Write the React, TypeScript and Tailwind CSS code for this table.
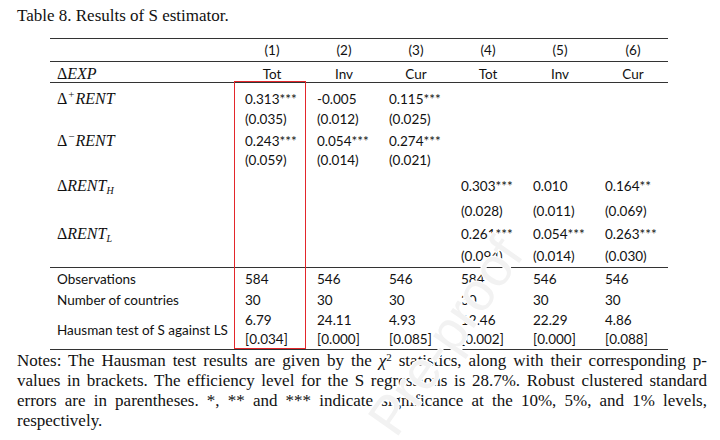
const cols = ["(1)", "(2)", "(3)", "(4)", "(5)", "(6)"];
const deps = ["Tot", "Inv", "Cur", "Tot", "Inv", "Cur"];

type Label = { sup?: string; sub?: string } | null;

const body: { label: Label; h: string; cells: string[] }[] = [
  { label: { sup: "+" }, h: "h-[22px]", cells: ["0.313***", "-0.005", "0.115***", "", "", ""] },
  { label: null, h: "h-[20px]", cells: ["(0.035)", "(0.012)", "(0.025)", "", "", ""] },
  { label: { sup: "−" }, h: "h-[20px]", cells: ["0.243***", "0.054***", "0.274***", "", "", ""] },
  { label: null, h: "h-[22px]", cells: ["(0.059)", "(0.014)", "(0.021)", "", "", ""] },
  { label: { sub: "H" }, h: "h-[30px]", cells: ["", "", "", "0.303***", "0.010", "0.164**"] },
  { label: null, h: "h-[21px]", cells: ["", "", "", "(0.028)", "(0.011)", "(0.069)"] },
  { label: { sub: "L" }, h: "h-[24px]", cells: ["", "", "", "0.261***", "0.054***", "0.263***"] },
  { label: null, h: "h-[21px]", cells: ["", "", "", "(0.094)", "(0.014)", "(0.030)"] },
];

const hausman = [
  ["6.79", "[0.034]"],
  ["24.11", "[0.000]"],
  ["4.93", "[0.085]"],
  ["12.46", "[0.002]"],
  ["22.29", "[0.000]"],
  ["4.86", "[0.088]"],
];

const grid = "grid grid-cols-[184px_72px_72px_72px_72px_72px_74px]";
const math = "font-['Liberation_Serif',serif] italic text-[16px]";

function RentLabel({ label }: { label: Label }) {
  if (!label) return <div />;
  return (
    <div className={`pl-[7px] flex items-center ${math}`}>
      <span className="not-italic">Δ</span>
      {label.sup && <span className="not-italic text-[11px] -translate-y-[5px] px-[1px]">{label.sup}</span>}
      <span>RENT</span>
      {label.sub && <span className="text-[10px] translate-y-[4px]">{label.sub}</span>}
    </div>
  );
}

export default function App() {
  return (
    <div className="relative w-[720px] h-[440px] bg-white overflow-hidden text-[#111]">
      <p className="pl-[17px] pt-[5px] font-['Liberation_Serif',serif] text-[17px] leading-[22px]">
        Table 8. Results of S estimator.
      </p>

      <div className="ml-[50px] mt-[11px] w-[618px] font-['Lato',sans-serif] text-[13.5px]">
        <div className={`${grid} border-t border-[#333] h-[23px] items-center`}>
          <div />
          {cols.map((c) => (
            <div key={c} className="text-center pl-[4px]">{c}</div>
          ))}
        </div>
        <div className={`${grid} border-t border-[#333] h-[21px] items-center`}>
          <div className={`pl-[7px] ${math}`}>
            <span className="not-italic">Δ</span>EXP
          </div>
          {deps.map((d, i) => (
            <div key={i} className="text-center pl-[4px]">{d}</div>
          ))}
        </div>

        <div className="border-t border-[#333] pt-[4px] border-b">
          {body.map((r, i) => (
            <div key={i} className={`${grid} ${r.h} items-center`}>
              <RentLabel label={r.label} />
              {r.cells.map((c, j) => (
                <div key={j} className="pl-[11px] whitespace-nowrap">{c}</div>
              ))}
            </div>
          ))}
        </div>

        <div className={`${grid} h-[22px] items-center`}>
          <div className="pl-[7px]">Observations</div>
          {["584", "546", "546", "584", "546", "546"].map((v, j) => (
            <div key={j} className="pl-[11px]">{v}</div>
          ))}
        </div>
        <div className={`${grid} h-[21px] items-center`}>
          <div className="pl-[7px]">Number of countries</div>
          {cols.map((_, j) => (
            <div key={j} className="pl-[11px]">30</div>
          ))}
        </div>
        <div className={`${grid} items-center border-b border-[#333] leading-[19px]`}>
          <div className="pl-[7px]">Hausman test of S against LS</div>
          {hausman.map(([a, b], j) => (
            <div key={j} className="pl-[11px]">
              <div>{a}</div>
              <div>{b}</div>
            </div>
          ))}
        </div>
      </div>

      <div className="font-['Liberation_Serif',serif] text-[17px] leading-[20px] pl-[17px] w-[707px] pt-[1px]">
        <div className="text-justify [text-align-last:justify]">
          Notes: The Hausman test results are given by the{" "}
          <span className="italic">χ</span>
          <sup className="text-[11px]">2</sup> statistics, along with their corresponding p-
        </div>
        <div className="text-justify [text-align-last:justify]">
          values in brackets. The efficiency level for the S regressions is 28.7%. Robust clustered standard
        </div>
        <div className="text-justify [text-align-last:justify]">
          errors are in parentheses. *, ** and *** indicate significance at the 10%, 5%, and 1% levels,
        </div>
        <div>respectively.</div>
      </div>

      {/* highlight around column (1) */}
      <div className="absolute left-[234px] top-[81px] w-[72px] h-[268px] border-[1.5px] border-[#e3262b]" />

      {/* faint watermark */}
      <span className="absolute left-[310px] top-[304px] w-[270px] text-center font-['Liberation_Sans',sans-serif] text-[54px] leading-[64px] text-[#f2f2f2] rotate-[-55deg] [paint-order:stroke_fill] [-webkit-text-stroke:2px_white] pointer-events-none whitespace-nowrap">
        Pre-proof
      </span>
    </div>
  );
}
